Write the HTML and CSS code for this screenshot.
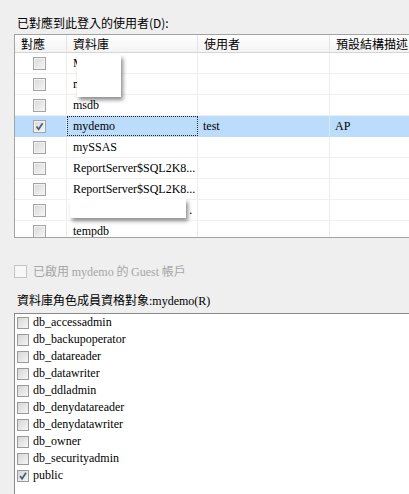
FILE: index.html
```html
<!DOCTYPE html>
<html>
<head>
<meta charset="utf-8">
<link rel="stylesheet" href="styles.css">
</head>
<body>
<div class="page">
  <div class="label label-top">已對應到此登入的使用者(D):</div>
  <div class="grid">
    <div class="row head">
      <div class="c c1">對應</div>
      <div class="c c2">資料庫</div>
      <div class="c c3">使用者</div>
      <div class="c c4">預設結構描述</div>
    </div>
    <div class="row"><div class="c c1"><span class="cb"></span></div><div class="c c2 t">Master</div><div class="c c3"></div><div class="c c4"></div></div>
    <div class="row"><div class="c c1"><span class="cb"></span></div><div class="c c2 t">model</div><div class="c c3"></div><div class="c c4"></div></div>
    <div class="row"><div class="c c1"><span class="cb"></span></div><div class="c c2 t">msdb</div><div class="c c3"></div><div class="c c4"></div></div>
    <div class="row sel"><div class="c c1"><span class="cb"><svg viewBox="0 0 13 13" width="13" height="13"><path d="M3.5 6.5 L5.6 9.2 L9.6 3.2" fill="none" stroke="#4a5c7c" stroke-width="1.7"/></svg></span></div><div class="c c2 t focus">mydemo</div><div class="c c3 t">test</div><div class="c c4 t">AP</div></div>
    <div class="row"><div class="c c1"><span class="cb"></span></div><div class="c c2 t">mySSAS</div><div class="c c3"></div><div class="c c4"></div></div>
    <div class="row"><div class="c c1"><span class="cb"></span></div><div class="c c2 t">ReportServer$SQL2K8...</div><div class="c c3"></div><div class="c c4"></div></div>
    <div class="row"><div class="c c1"><span class="cb"></span></div><div class="c c2 t">ReportServer$SQL2K8...</div><div class="c c3"></div><div class="c c4"></div></div>
    <div class="row"><div class="c c1"><span class="cb"></span></div><div class="c c2 t">ReportServer$SQL2K8&nbsp;.</div><div class="c c3"></div><div class="c c4"></div></div>
    <div class="row"><div class="c c1"><span class="cb"></span></div><div class="c c2 t">tempdb</div><div class="c c3"></div><div class="c c4"></div></div>
    <div class="mask mask1"></div>
    <div class="mask mask2"></div>
  </div>

  <div class="guest">
    <span class="gcb"></span>
    <span class="gtext">已啟用 <span class="latin">mydemo</span> 的 <span class="latin">Guest</span> 帳戶</span>
  </div>

  <div class="label label-roles">資料庫角色成員資格對象<span class="latin">:mydemo(R)</span></div>
  <div class="list">
    <div class="item"><span class="lcb"></span>db_accessadmin</div>
    <div class="item"><span class="lcb"></span>db_backupoperator</div>
    <div class="item"><span class="lcb"></span>db_datareader</div>
    <div class="item"><span class="lcb"></span>db_datawriter</div>
    <div class="item"><span class="lcb"></span>db_ddladmin</div>
    <div class="item"><span class="lcb"></span>db_denydatareader</div>
    <div class="item"><span class="lcb"></span>db_denydatawriter</div>
    <div class="item"><span class="lcb"></span>db_owner</div>
    <div class="item"><span class="lcb"></span>db_securityadmin</div>
    <div class="item"><span class="lcb"><svg viewBox="0 0 12 12" width="12" height="12"><path d="M3 6 L5.1 8.8 L9 2.8" fill="none" stroke="#4a5c7c" stroke-width="1.7"/></svg></span>public</div>
  </div>
</div>
</body>
</html>
```
FILE: styles.css
```css
html, body {
  margin: 0;
  padding: 0;
  background: #efefef;
  overflow: hidden;
  width: 409px;
  height: 494px;
}
.page {
  font-family: "Noto Sans CJK TC", "Noto Sans", sans-serif;
  font-size: 12px;
  color: #000;
  width: 409px;
  height: 494px;
  overflow: hidden;
}
.latin {
  font-family: "Liberation Serif", serif;
}
.label {
  line-height: 16px;
  padding-left: 17px;
  white-space: nowrap;
}
.label-top {
  padding-top: 15px;
  height: 19px;
}
.grid {
  position: relative;
  margin-left: 14px;
  height: 202px;
  border: 1px solid #a3a3a3;
  border-right: none;
  background: #fff;
  overflow: hidden;
}
.row {
  display: grid;
  grid-template-columns: 52px 131px 132px 120px;
  height: 21px;
  border-bottom: 1px solid #f0f0f0;
  box-sizing: border-box;
}
.row.head {
  height: 18px;
  border-bottom: 1px solid #d5d5d5;
  background: linear-gradient(#ffffff, #f3f3f3);
}
.c {
  border-right: 1px solid #ececec;
  box-sizing: border-box;
  white-space: nowrap;
  overflow: hidden;
}
.head .c {
  line-height: 17px;
  padding-left: 6px;
  border-right-color: #e3e3e3;
}
.c1 {
  display: flex;
  align-items: center;
  justify-content: center;
  padding-left: 0;
}
.head .c1 {
  justify-content: flex-start;
  padding-left: 6px;
}
.t {
  font-family: "Liberation Serif", serif;
  font-size: 12px;
  line-height: 20px;
  padding-left: 6px;
}
.c3.t, .c4.t {
  padding-left: 5px;
}
.sel {
  background: #bcdcfb;
  border-bottom-color: #bcdcfb;
}
.sel .c {
  border-right-color: #d6e8fb;
}
.focus {
  outline: 1px dotted #222;
  outline-offset: -1px;
}
.cb {
  width: 13px;
  height: 13px;
  box-sizing: border-box;
  border: 1px solid #a4a4a4;
  background: linear-gradient(135deg, #d8d8d8, #f6f6f6);
  box-shadow: inset 0 0 0 1px #f2f2f2;
  display: block;
  margin-left: -2px;
  position: relative;
}
.cb svg, .lcb svg {
  position: absolute;
  left: -1px;
  top: -1px;
}
.mask {
  position: absolute;
  background: #fff;
  box-shadow: 2px 3px 4px rgba(0,0,0,0.45);
}
.mask1 {
  left: 62px;
  top: 20px;
  width: 44px;
  height: 42px;
}
.mask2 {
  left: 55px;
  top: 164px;
  width: 116px;
  height: 19px;
}
.guest {
  display: flex;
  align-items: center;
  height: 16px;
  margin-top: 25px;
  padding-left: 14px;
}
.gcb {
  width: 13px;
  height: 13px;
  box-sizing: border-box;
  border: 1px solid #c4c4c4;
  background: #f7f7f7;
  margin-right: 6px;
}
.gtext {
  color: #a6a6a6;
  white-space: nowrap;
  line-height: 16px;
}
.label-roles {
  margin-top: 13px;
  height: 17px;
}
.list {
  margin-top: 4px;
  margin-left: 14px;
  border-top: 1px solid #8a8a8a;
  border-left: 1px solid #8a8a8a;
  background: #fff;
  height: 200px;
  padding-top: 0;
}
.item {
  display: flex;
  align-items: center;
  height: 17px;
  font-family: "Liberation Serif", serif;
  font-size: 12px;
  padding-left: 2px;
  white-space: nowrap;
}
.lcb {
  position: relative;
  width: 12px;
  height: 12px;
  box-sizing: border-box;
  border: 1px solid #9a9a9a;
  background: linear-gradient(135deg, #d6d6d6, #f5f5f5);
  margin-right: 4px;
  flex: none;
}
```
